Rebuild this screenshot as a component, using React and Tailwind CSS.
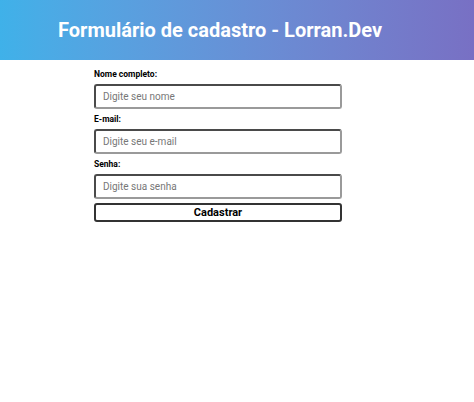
export default function App() {
  const fields = [
    { id: 'nome', label: 'Nome completo:', type: 'text', placeholder: 'Digite seu nome' },
    { id: 'email', label: 'E-mail:', type: 'email', placeholder: 'Digite seu e-mail' },
    { id: 'senha', label: 'Senha:', type: 'password', placeholder: 'Digite sua senha' },
  ];

  return (
    <div className="min-h-[402px] bg-white font-['Roboto',sans-serif]">
      <header className="h-[60px] flex items-center pl-[58px] bg-gradient-to-r from-[#3fb1e9] to-[#7870c4]">
        <h1 className="text-[20px] font-bold text-white leading-none">Formulário de cadastro - Lorran.Dev</h1>
      </header>

      <form className="w-[248px] ml-[94px] pt-[8px] flex flex-col" onSubmit={(e) => e.preventDefault()}>
        {fields.map((f) => (
          <div key={f.id} className="flex flex-col">
            <label htmlFor={f.id} className="text-[8.5px] font-bold text-black leading-[10px] h-[16px] pt-[1px]">
              {f.label}
            </label>
            <input
              id={f.id}
              type={f.type}
              placeholder={f.placeholder}
              className="h-[25px] px-[7px] text-[10px] border-2 border-[#4a4a4a] border-r-[#9a9a9a] border-b-[#9a9a9a] rounded-[3px] mb-[4px] outline-none placeholder:text-[#777]"
            />
          </div>
        ))}
        <button
          type="submit"
          className="h-[19px] border-2 border-[#333] rounded-[3px] text-[11px] font-bold text-black leading-none bg-white"
        >
          Cadastrar
        </button>
      </form>
    </div>
  );
}
